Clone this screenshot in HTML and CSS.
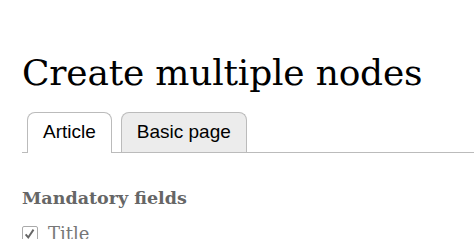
FILE: index.html
```html
<!DOCTYPE html>
<html lang="en">
<head>
    <meta charset="UTF-8">
    <meta name="viewport" content="width=device-width, initial-scale=1.0">
    <title>Create multiple nodes</title>
    <link rel="stylesheet" href="styles.css">
</head>
<body>
    <h1 class="page-title">Create multiple nodes</h1>
    <ul class="tabs">
        <li class="tab tab-active">Article</li>
        <li class="tab">Basic page</li>
    </ul>
    <div class="tab-content">
        <h3 class="fields-title">Mandatory fields</h3>
        <div class="field">
            <span class="check">
                <svg xmlns="http://www.w3.org/2000/svg" viewBox="0 0 16 16">
                    <path d="M3 8.5l3 3.5 6-9" />
                </svg>
            </span>
            <span class="field-label">Title</span>
        </div>
    </div>
</body>
</html>
```

FILE: styles.css
```css
/* Estilos globales */
* {
    box-sizing: border-box;
    margin: 0;
    padding: 0;
}

body {
    background-color: #fff;
    color: #000;
    padding: 0 0 0 22px;
    font-family: "DejaVu Serif", Georgia, serif;
}

.page-title {
    font-weight: normal;
    font-size: 36px;
    line-height: 44px;
    margin-top: 51px;
    letter-spacing: -0.2px;
}

/* Pestañas */
.tabs {
    display: flex;
    list-style: none;
    gap: 9px;
    margin-top: 17px;
    padding-left: 5px;
    border-bottom: 1px solid #bbb;
}

.tab {
    font-family: "Liberation Sans", Arial, sans-serif;
    font-size: 19px;
    height: 40px;
    line-height: 38px;
    padding: 0 15px;
    border: 1px solid #bbb;
    border-bottom: none;
    border-radius: 8px 8px 0 0;
    background-color: #ececec;
    color: #000;
    margin-bottom: -1px;
}

.tab-active {
    background-color: #fff;
    height: 41px;
}

/* Campos */
.tab-content {
    padding-top: 33px;
}

.fields-title {
    font-size: 17.5px;
    font-weight: bold;
    color: #666;
    line-height: 24px;
}

.field {
    display: flex;
    align-items: center;
    gap: 10px;
    margin-top: 13px;
}

.check {
    display: flex;
    width: 16px;
    height: 16px;
    border: 1px solid #aaa;
    border-radius: 2px;
}

.check svg {
    width: 14px;
    height: 14px;
    fill: none;
    stroke: #666;
    stroke-width: 2.2;
}

.field-label {
    font-size: 18px;
    color: #777;
}
```
